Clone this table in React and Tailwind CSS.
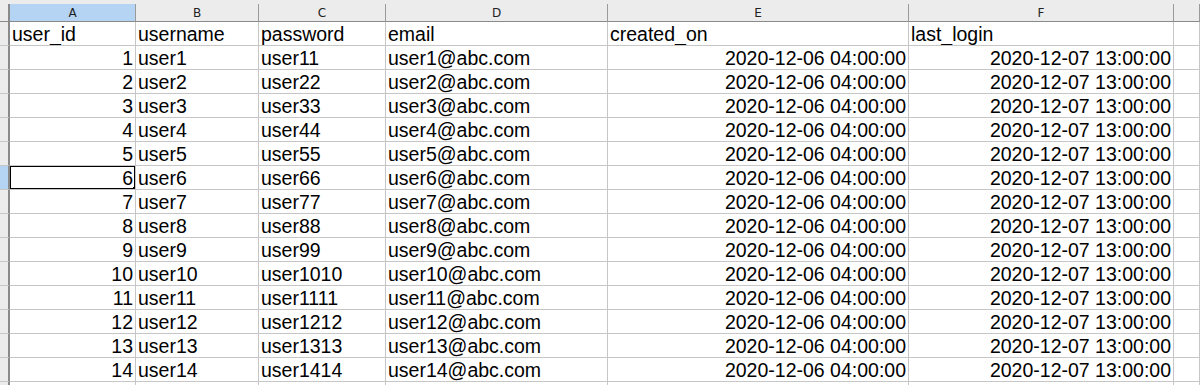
const columns = ['A', 'B', 'C', 'D', 'E', 'F', ''];

const rows = Array.from({ length: 14 }, (_, i) => {
  const n = i + 1;
  return {
    id: n,
    username: `user${n}`,
    password: `user${n}${n}`,
    email: `user${n}@abc.com`,
    created: '2020-12-06 04:00:00',
    login: '2020-12-07 13:00:00',
  };
});

const cell = 'h-6 border-r border-b border-[#c6c6c6] flex items-center overflow-hidden whitespace-nowrap px-[2px] pt-[2px]';
const rowHead = 'h-6 border-r-2 border-b border-r-[#8a8a8a] border-b-[#c6c6c6]';

export default function App() {
  const selectedRow = 6;

  return (
    <div
      className="w-[1200px] h-[385px] overflow-hidden bg-white text-black"
      style={{ fontFamily: '"Liberation Sans", Arial, sans-serif' }}
    >
      <div className="h-[4px] bg-[#ececec]" />
      <div className="grid grid-cols-[10px_126px_123px_127px_222px_301px_265px_1fr]">
        {/* column letters */}
        <div className="h-[18px] bg-[#ececec] border-r-2 border-b border-r-[#8a8a8a] border-b-[#8a8a8a]" />
        {columns.map((c, i) => (
          <div
            key={i}
            className={`h-[18px] border-r border-b border-r-[#9a9a9a] border-b-[#8a8a8a] flex items-center justify-center text-[12px] text-[#222] ${
              c === 'A' ? 'bg-[#b5d3f3]' : 'bg-[#ececec]'
            }`}
            style={{ fontFamily: '"DejaVu Sans", sans-serif' }}
          >
            {c}
          </div>
        ))}

        {/* field names */}
        <div className={`${rowHead} bg-[#ececec]`} />
        {['user_id', 'username', 'password', 'email', 'created_on', 'last_login', ''].map((h, i) => (
          <div key={i} className={`${cell} text-[19.5px]`}>
            {h}
          </div>
        ))}

        {rows.map((r) => {
          const sel = r.id === selectedRow;
          return [
            <div key={`h${r.id}`} className={`${rowHead} ${sel ? 'bg-[#b5d3f3]' : 'bg-[#ececec]'}`} />,
            <div key={`a${r.id}`} className={`${cell} relative justify-end text-[19.5px]`}>
              {r.id}
              {sel && (
                <>
                  <div className="absolute -left-px -top-px w-[127px] h-[25px] border-2 border-black pointer-events-none" />
                  <div className="absolute right-[-3px] bottom-[-3px] w-[5px] h-[5px] bg-black" />
                </>
              )}
            </div>,
            <div key={`b${r.id}`} className={`${cell} text-[19.5px]`}>{r.username}</div>,
            <div key={`c${r.id}`} className={`${cell} text-[19.5px]`}>{r.password}</div>,
            <div key={`d${r.id}`} className={`${cell} text-[19.5px]`}>{r.email}</div>,
            <div key={`e${r.id}`} className={`${cell} justify-end text-[19.5px]`}>{r.created}</div>,
            <div key={`f${r.id}`} className={`${cell} justify-end text-[19.5px]`}>{r.login}</div>,
            <div key={`g${r.id}`} className={cell} />,
          ];
        })}

        {/* next empty row */}
        <div className={`${rowHead} bg-[#ececec]`} />
        {columns.map((_, i) => (
          <div key={`e${i}`} className={cell} />
        ))}
      </div>
    </div>
  );
}
